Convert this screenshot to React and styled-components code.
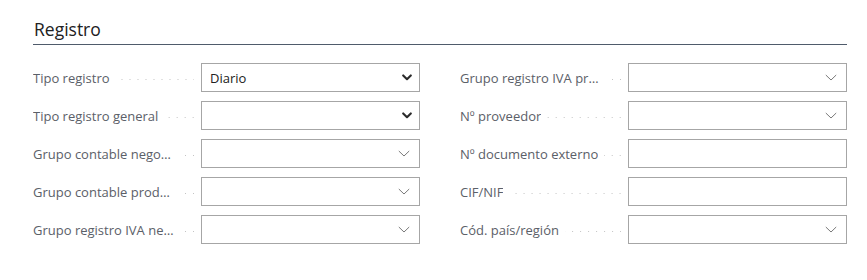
import React from "react";
import styled, { createGlobalStyle } from "styled-components";

const Global = createGlobalStyle`
  html, body { margin: 0; padding: 0; background: #ffffff; }
  body { font-family: "Open Sans", "Noto Sans", sans-serif; }
`;

const Page = styled.div`
  padding: 17px 20px 0 33px;
  width: 867px;
  box-sizing: border-box;
`;

const Header = styled.div`
  border-bottom: 1px solid #4f5b6b;
  padding: 0 0 0 1px;
  height: 28px;
  box-sizing: border-box;
`;

const Title = styled.h2`
  margin: 0;
  font-size: 17.5px;
  line-height: 24px;
  font-weight: 400;
  color: #212121;
  font-family: "Open Sans", sans-serif;
`;

const Columns = styled.div`
  display: grid;
  grid-template-columns: 387px 387px;
  column-gap: 40px;
  padding-top: 18px;
`;

const Column = styled.div`
  display: flex;
  flex-direction: column;
  gap: 9px;
`;

const Row = styled.div`
  display: flex;
  align-items: center;
  height: 29px;
`;

const LabelCell = styled.div`
  width: 168px;
  flex: 0 0 168px;
  display: flex;
  align-items: center;
  padding-right: 7px;
  box-sizing: border-box;
`;

const LabelText = styled.span`
  flex: 0 1 auto;
  max-width: 141px;
  min-width: 0;
  white-space: nowrap;
  overflow: hidden;
  text-overflow: ellipsis;
  font-family: "Open Sans", sans-serif;
  font-size: 13px;
  color: #5b6068;
`;

const Leader = styled.span`
  flex: 1 0 8px;
  height: 1px;
  margin-left: 6px;
  margin-top: 4px;
  background-image: linear-gradient(to left, #c4c4c4 1px, transparent 1px);
  background-size: 8px 1px;
  background-position: right center;
  background-repeat: repeat-x;
`;

const Field = styled.div`
  flex: 1 1 auto;
  height: 29px;
  border: 1px solid #a6a6a6;
  box-sizing: border-box;
  display: flex;
  align-items: center;
  justify-content: space-between;
  padding: 0 8px 0 8px;
  font-family: "Open Sans", sans-serif;
  font-size: 13px;
  color: #212121;
  background: #fff;
`;

const Value = styled.span`
  white-space: nowrap;
`;

const Chevron = ({ bold }) =>
  bold ? (
    <svg width="10" height="7" viewBox="0 0 10 7" style={{ marginRight: -1 }}>
      <path d="M1.2 1.4 L5 5.2 L8.8 1.4" fill="none" stroke="#2b2b2b" strokeWidth="2.1" strokeLinecap="round" strokeLinejoin="round" />
    </svg>
  ) : (
    <svg width="12" height="7" viewBox="0 0 12 7" style={{ marginRight: 1 }}>
      <path d="M0.8 1 L6 6 L11.2 1" fill="none" stroke="#6a6a6a" strokeWidth="0.9" />
    </svg>
  );

const left = [
  { label: "Tipo registro", value: "Diario", type: "bold" },
  { label: "Tipo registro general", value: "", type: "bold" },
  { label: "Grupo contable negocio", value: "", type: "thin" },
  { label: "Grupo contable producto", value: "", type: "thin" },
  { label: "Grupo registro IVA negocio", value: "", type: "thin" },
];

const right = [
  { label: "Grupo registro IVA producto", value: "", type: "thin" },
  { label: "Nº proveedor", value: "", type: "thin" },
  { label: "Nº documento externo", value: "", type: "none" },
  { label: "CIF/NIF", value: "", type: "none" },
  { label: "Cód. país/región", value: "", type: "thin" },
];

const FieldRow = ({ label, value, type }) => (
  <Row>
    <LabelCell>
      <LabelText title={label}>{label}</LabelText>
      <Leader />
    </LabelCell>
    <Field>
      <Value>{value}</Value>
      {type !== "none" && <Chevron bold={type === "bold"} />}
    </Field>
  </Row>
);

export default function App() {
  return (
    <>
      <Global />
      <Page>
        <Header>
          <Title>Registro</Title>
        </Header>
        <Columns>
          <Column>
            {left.map((f) => (
              <FieldRow key={f.label} {...f} />
            ))}
          </Column>
          <Column>
            {right.map((f) => (
              <FieldRow key={f.label} {...f} />
            ))}
          </Column>
        </Columns>
      </Page>
    </>
  );
}
